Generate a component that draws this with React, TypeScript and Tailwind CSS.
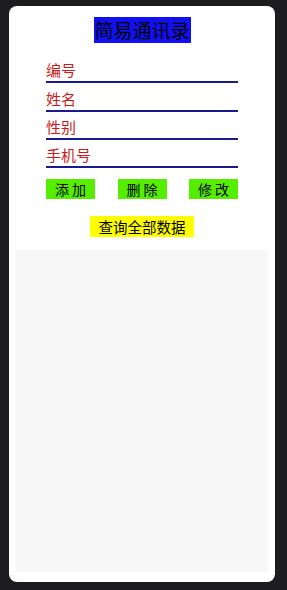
import React from "react";

const font = { fontFamily: '"Noto Sans CJK SC", "Noto Sans", sans-serif' };

export default function App() {
  const fields = ["编号", "姓名", "性别", "手机号"];
  return (
    <div
      className="w-[287px] h-[590px] bg-[#1d1d1f] pt-[6px] pb-[8px] pl-[9px] pr-[12px] flex"
      style={font}
    >
      <div className="flex-1 bg-white rounded-[8px] flex flex-col">
        <div className="flex justify-center mt-[11px]">
          <div className="bg-[#1010f0] text-black text-[19px] leading-[26px] h-[26px] px-[1px] w-[97px] text-center">
            简易通讯录
          </div>
        </div>
        <div className="mx-[37px] mt-[12px] flex flex-col">
          {fields.map((f, i) => (
            <div
              key={f}
              className={`flex items-end border-b-2 border-[#1a1a90] ${i === 1 ? "h-[29px]" : "h-[28px]"}`}
            >
              <span className="text-[15px] leading-[20px] text-[#cc1a1a] pb-[1px]">{f}</span>
            </div>
          ))}
          <div className="flex justify-between mt-[11px]">
            {["添 加", "删 除", "修 改"].map((b) => (
              <div
                key={b}
                className="w-[49px] h-[20px] bg-[#55ee00] text-black text-[14px] leading-[20px] text-center whitespace-pre"
              >
                {b}
              </div>
            ))}
          </div>
        </div>
        <div className="flex justify-center mt-[17px]">
          <div className="bg-[#ffff00] w-[104px] h-[21px] text-black text-[14.5px] leading-[21px] text-center">
            查询全部数据
          </div>
        </div>
        <div className="flex-1 bg-[#f7f7f7] mx-[7px] mt-[13px] mb-[10px]" />
      </div>
    </div>
  );
}
